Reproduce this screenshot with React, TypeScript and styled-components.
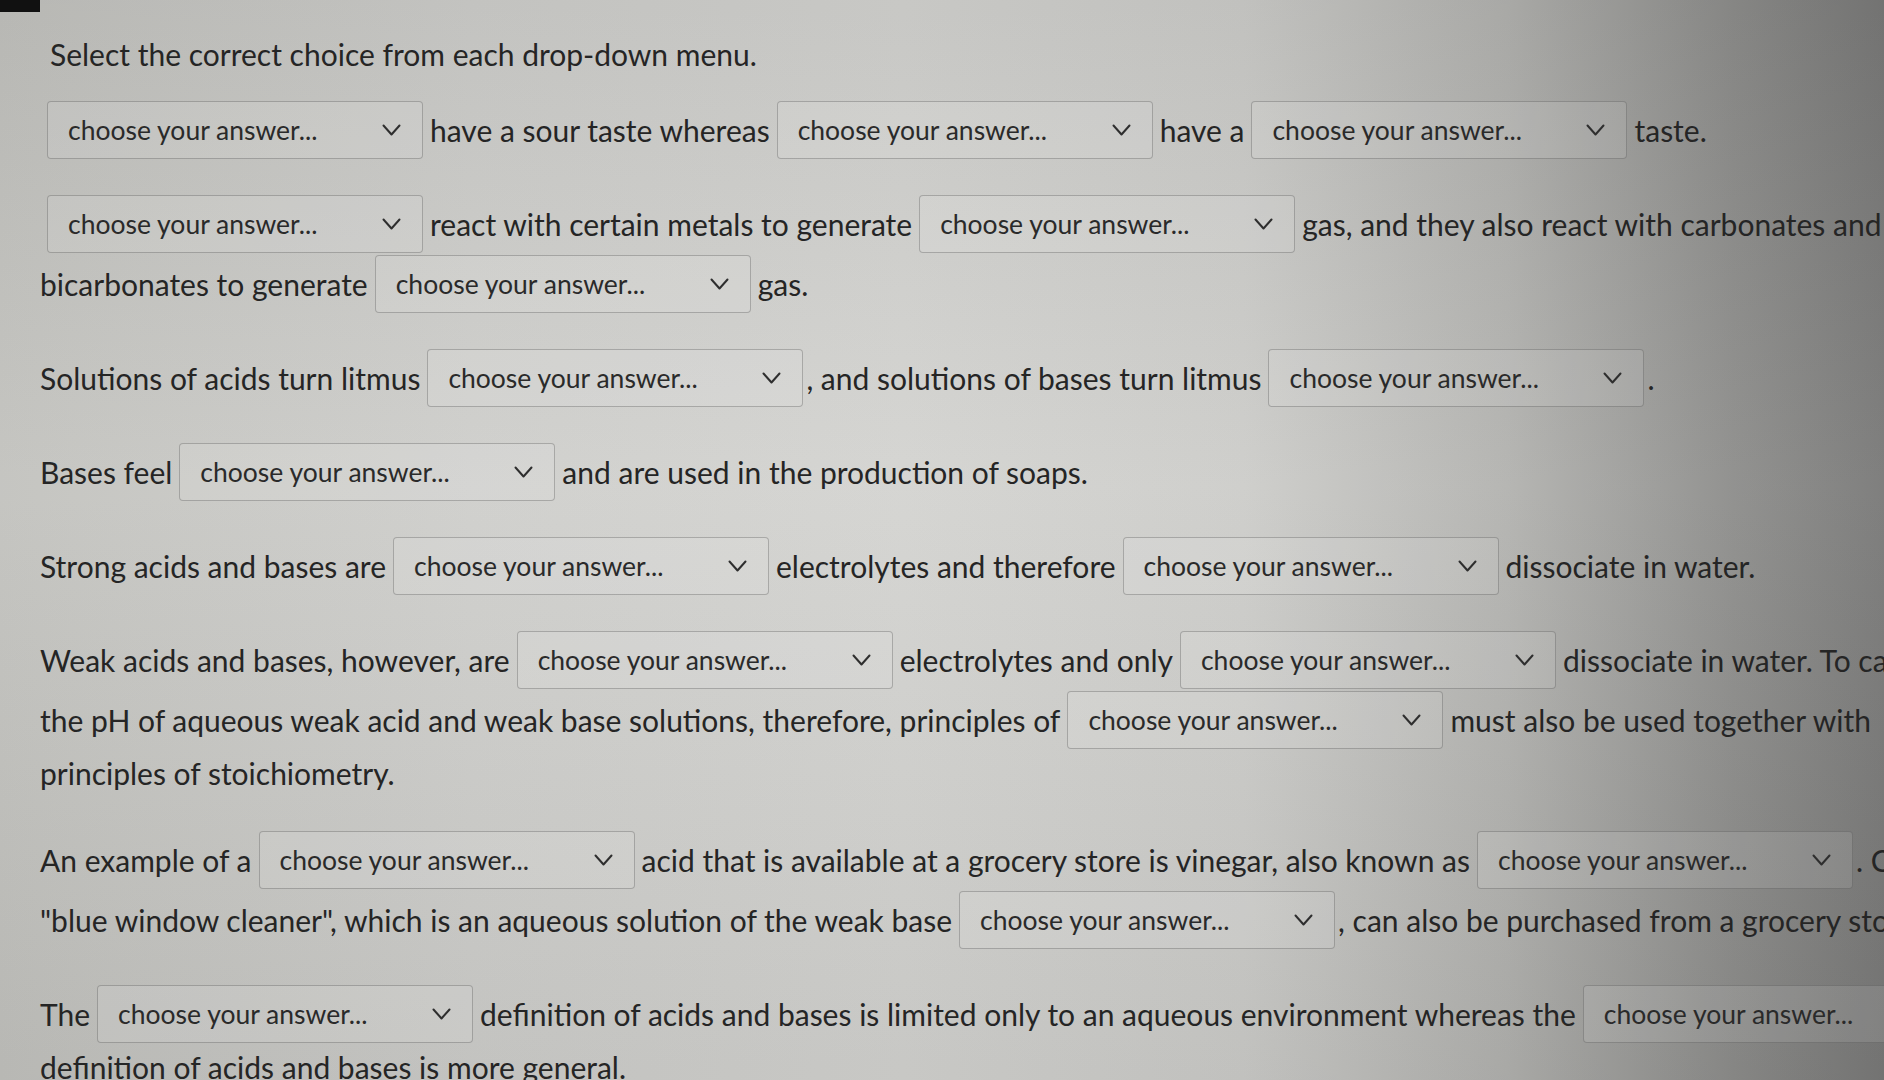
import { FunctionComponent } from "react";
import styled, { createGlobalStyle } from "styled-components";

const GlobalStyle = createGlobalStyle`
	html, body {
		margin: 0;
		padding: 0;
		height: 100%;
		overflow: hidden;
	}
	body {
		font-family: Lato, "Open Sans", "Liberation Sans", sans-serif;
		color: #252525;
		background: linear-gradient(90deg, #c3c3bf 0%, #cfcfcc 25%, #d4d4d1 48%, #cdcdca 66%, #b3b3b0 80%, #8e8e8c 92%, #7a7a79 100%);
	}
`;

const Page = styled.main`
	position: relative;
	width: 2200px;
	height: 1080px;
	padding: 34px 0 0 40px;
	box-sizing: border-box;
	background: linear-gradient(180deg, rgba(0, 0, 0, 0.06) 0%, rgba(255, 255, 255, 0.04) 45%, rgba(0, 0, 0, 0.06) 100%);
`;

const Bezel = styled.div`
	position: absolute;
	top: 0;
	left: 0;
	width: 40px;
	height: 12px;
	background: #111;
`;

const Heading = styled.h1`
	margin: 0 0 26px 10px;
	font-size: 30px;
	font-weight: 400;
	line-height: 40px;
`;

const Paragraph = styled.div`
	margin-bottom: 34px;
`;

const Line = styled.div<{ $short?: boolean }>`
	display: flex;
	align-items: center;
	height: ${(p) => (p.$short ? "46px" : "60px")};
	white-space: nowrap;
	font-size: 30px;
	line-height: 1;
`;

const Text = styled.span`
	flex: none;
`;

const Box = styled.div<{ $tight?: boolean }>`
	flex: none;
	display: flex;
	align-items: center;
	justify-content: space-between;
	box-sizing: border-box;
	width: 376px;
	height: 58px;
	margin: 0 ${(p) => (p.$tight ? "3px" : "7px")} 0 7px;
	padding: 0 21px 0 20px;
	border: 1px solid rgba(70, 70, 70, 0.32);
	border-radius: 4px;
	background: rgba(255, 255, 255, 0.1);
	font-size: 26.5px;
	color: #2a2a2a;
`;

const Chevron = () => (
	<svg width="19" height="12" viewBox="0 0 19 12" fill="none">
		<polyline points="1.5,1.5 9.5,10.5 17.5,1.5" stroke="#2e2e2e" strokeWidth="2" strokeLinejoin="round" strokeLinecap="round" />
	</svg>
);

const Select = ({ tight }: { tight?: boolean }) => (
	<Box $tight={tight}>
		<span>choose your answer...</span>
		<Chevron />
	</Box>
);

// null marks a drop-down
type Token = string | null;

const paragraphs: Token[][][] = [
	[[null, "have a sour taste whereas", null, "have a", null, "taste."]],
	[
		[null, "react with certain metals to generate", null, "gas, and they also react with carbonates and"],
		["bicarbonates to generate", null, "gas."]
	],
	[["Solutions of acids turn litmus", null, ", and solutions of bases turn litmus", null, "."]],
	[["Bases feel", null, "and are used in the production of soaps."]],
	[["Strong acids and bases are", null, "electrolytes and therefore", null, "dissociate in water."]],
	[
		["Weak acids and bases, however, are", null, "electrolytes and only", null, "dissociate in water. To calculate"],
		["the pH of aqueous weak acid and weak base solutions, therefore, principles of", null, "must also be used together with"],
		["principles of stoichiometry."]
	],
	[
		["An example of a", null, "acid that is available at a grocery store is vinegar, also known as", null, ". Classic"],
		['"blue window cleaner", which is an aqueous solution of the weak base', null, ", can also be purchased from a grocery store."]
	],
	[
		["The", null, "definition of acids and bases is limited only to an aqueous environment whereas the", null],
		["definition of acids and bases is more general."]
	]
];

const App: FunctionComponent = () => {
	return (
		<>
			<GlobalStyle />
			<Page>
				<Bezel />
				<Heading>Select the correct choice from each drop-down menu.</Heading>
				{paragraphs.map((lines, i) => (
					<Paragraph key={i}>
						{lines.map((tokens, j) => (
							<Line key={j} $short={!tokens.includes(null)}>
								{tokens.map((t, k) => {
									if (t === null) {
										const next = tokens[k + 1];
										const tight = typeof next === "string" && /^[.,]/.test(next);
										return <Select key={k} tight={tight} />;
									}
									return <Text key={k}>{t}</Text>;
								})}
							</Line>
						))}
					</Paragraph>
				))}
			</Page>
		</>
	);
};

export default App;
